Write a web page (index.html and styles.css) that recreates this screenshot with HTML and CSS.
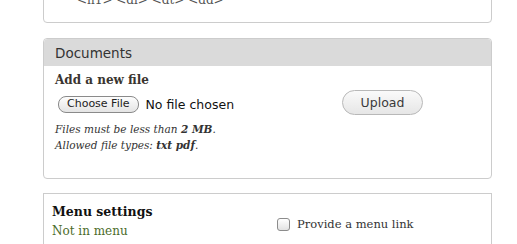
FILE: index.html
```html
<!DOCTYPE html>
<html lang="en">
<head>
    <meta charset="UTF-8">
    <title>Edit page</title>
    <link rel="stylesheet" href="styles.css">
</head>
<body>
    <div class="page">
        <div class="panel panel-top">
            <div class="tags">&lt;h1&gt; &lt;dl&gt; &lt;dt&gt; &lt;dd&gt;</div>
        </div>

        <fieldset class="panel documents">
            <div class="legend">Documents</div>
            <div class="panel-body">
                <div class="label">Add a new file</div>
                <div class="file-row">
                    <div class="file-field">
                        <span class="choose-btn">Choose File</span>
                        <span class="file-name">No file chosen</span>
                    </div>
                    <button class="upload-btn" type="button">Upload</button>
                </div>
                <div class="description">
                    Files must be less than <strong>2 MB</strong>.<br>
                    Allowed file types: <strong>txt pdf</strong>.
                </div>
            </div>
        </fieldset>

        <div class="panel menu">
            <div class="menu-summary">
                <div class="menu-title">Menu settings</div>
                <div class="menu-status">Not in menu</div>
            </div>
            <label class="menu-option">
                <span class="checkbox"></span>
                Provide a menu link
            </label>
        </div>
    </div>
</body>
</html>
```

FILE: styles.css
```css
body {
    margin: 0;
    background: #fff;
    font-family: "DejaVu Serif", Georgia, serif;
    color: #333;
    overflow: hidden;
}
.page {
    width: 449px;
    margin-left: 43px;
}
.panel {
    border: 1px solid #ccc;
    border-radius: 4px;
    box-sizing: border-box;
}
.panel-top {
    margin-top: -9px;
    padding: 0 0 14px 33px;
}
.tags {
    font-size: 12px;
    line-height: 16px;
    color: #555;
}
.documents {
    margin: 15px 0 0;
    padding: 0;
    min-width: 0;
    overflow: hidden;
}
.legend {
    background-color: #dadada;
    height: 27px;
    line-height: 28px;
    padding-left: 11px;
    font-family: "DejaVu Sans", "Lucida Grande", sans-serif;
    font-size: 13.5px;
    color: #333;
}
.panel-body {
    padding: 6px 11px 25px;
}
.label {
    font-size: 12px;
    font-weight: bold;
    line-height: 16px;
    color: #3a3530;
}
.file-row {
    display: flex;
    align-items: center;
    margin-top: 2px;
}
.file-field {
    width: 287px;
    box-sizing: border-box;
    padding-left: 3px;
    display: flex;
    align-items: center;
    margin-top: 3px;
}
.choose-btn {
    display: inline-block;
    height: 15px;
    line-height: 14px;
    padding: 0 8px;
    border: 1px solid #8a8a8a;
    border-radius: 8px;
    background: linear-gradient(#fdfdfd, #e4e4e4);
    font-family: "DejaVu Sans", sans-serif;
    font-size: 11px;
    color: #222;
}
.file-name {
    margin-left: 7px;
    font-family: "DejaVu Sans", sans-serif;
    font-size: 12.5px;
    color: #111;
}
.upload-btn {
    width: 81px;
    height: 25px;
    padding: 0;
    border: 1px solid #b8b8b8;
    border-radius: 13px;
    background: linear-gradient(#fafafa, #e6e6e6);
    font-family: "DejaVu Sans", sans-serif;
    font-size: 12.5px;
    color: #3a3a3a;
}
.description {
    margin-top: 6px;
    font-size: 10.5px;
    line-height: 16px;
    font-style: italic;
    color: #333;
}
.menu {
    margin-top: 14px;
    border-radius: 0;
    display: flex;
    padding: 9px 8px 20px;
}
.menu-summary {
    width: 225px;
}
.menu-title {
    font-size: 12.5px;
    font-weight: bold;
    line-height: 18px;
    color: #111;
}
.menu-status {
    font-size: 12px;
    line-height: 20px;
    color: #4b6b2a;
}
.menu-option {
    display: flex;
    align-items: center;
    margin-top: 12px;
    height: 18px;
    font-size: 11.5px;
    color: #333;
}
.checkbox {
    width: 11px;
    height: 11px;
    border: 1px solid #8c8c8c;
    border-radius: 3px;
    background: linear-gradient(#fff, #e2e2e2);
    margin-right: 7px;
}
```
